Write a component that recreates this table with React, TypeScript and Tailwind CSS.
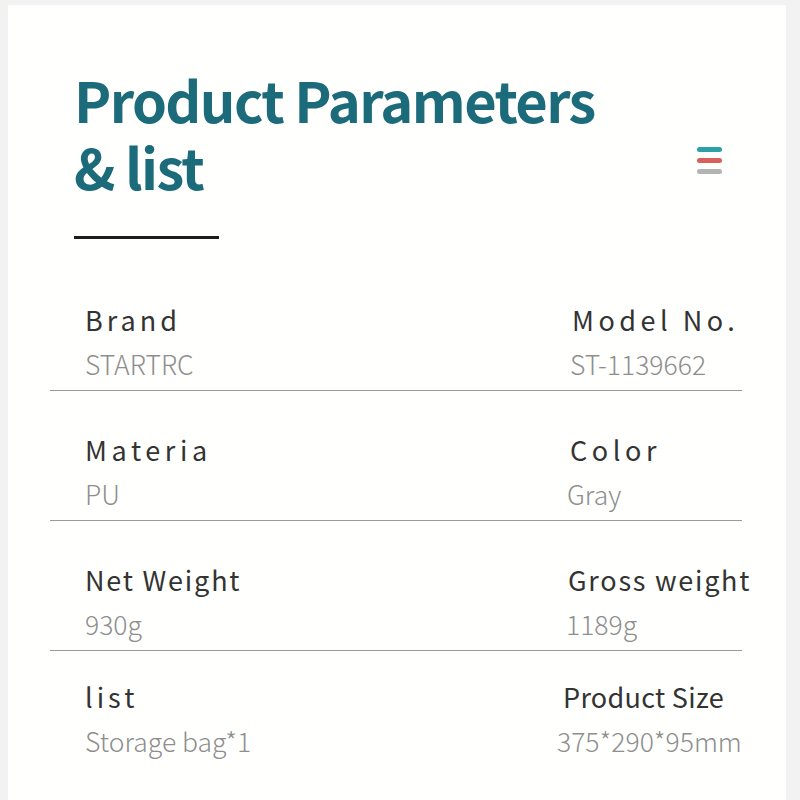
import React from "react";

const rows = [
  {
    l: { label: "Brand", value: "STARTRC", track: "tracking-[4px]" },
    r: { label: "Model No.", value: "ST-1139662", track: "tracking-[4.5px]", lx: "ml-[2px]", vx: "ml-[0px]" },
  },
  {
    l: { label: "Materia", value: "PU", track: "tracking-[4.6px]" },
    r: { label: "Color", value: "Gray", track: "tracking-[4.6px]", lx: "ml-[0px]", vx: "ml-[-3px]" },
  },
  {
    l: { label: "Net Weight", value: "930g", track: "tracking-[1.8px]" },
    r: { label: "Gross weight", value: "1189g", track: "tracking-[1.75px]", lx: "ml-[-2px]", vx: "ml-[-4px]" },
  },
  {
    l: { label: "list", value: "Storage bag*1", track: "tracking-[4px]" },
    r: { label: "Product Size", value: "375*290*95mm", track: "tracking-[0.3px]", lx: "ml-[-7px]", vx: "ml-[-13px]" },
  },
];

export default function App() {
  return (
    <div
      className="w-[800px] h-[800px] bg-[#f2f2f2] pt-[5px] pl-[8px] pr-[14px] overflow-hidden"
      style={{ fontFamily: '"Noto Sans CJK SC", "Noto Sans", sans-serif' }}
    >
      <div className="bg-[#fffffd] h-[795px] flex flex-col">
        <div className="flex items-start pl-[66px] pt-[60px] pr-[64px]">
          <div className="flex-1">
            <h1 className="text-[56px] font-bold text-[#1b6b7b] tracking-[-1.6px]">
              <div className="leading-[67px]">Product Parameters</div>
              <div className="leading-[67px]">& list</div>
            </h1>
            <div className="mt-[37px] w-[145px] h-[3px] bg-[#1c1c1c]" />
          </div>
          <div className="mt-[82px] flex flex-col gap-[6px]">
            <div className="w-[25px] h-[5px] rounded-full bg-[#2ba1a6]" />
            <div className="w-[25px] h-[5px] rounded-full bg-[#d8605b]" />
            <div className="w-[25px] h-[5px] rounded-full bg-[#b3b3b3]" />
          </div>
        </div>
        <div className="ml-[42px] w-[692px] mt-[22px]">
          {rows.map((row, i) => (
            <div
              key={i}
              className={`grid grid-cols-[520px_1fr] h-[130px] ${i < 3 ? "pt-[41px] border-b border-[#9a9a9a]" : "pt-[28px]"}`}
            >
              <div className="pl-[35px] whitespace-nowrap">
                <div className={`text-[27px] leading-[36px] text-[#333333] ${row.l.track}`}>{row.l.label}</div>
                <div className="text-[26.5px] leading-[34px] mt-[9px] font-light text-[#8e8e8e]">{row.l.value}</div>
              </div>
              <div className="whitespace-nowrap">
                <div className={`text-[27px] leading-[36px] text-[#333333] ${row.r.track} ${row.r.lx}`}>{row.r.label}</div>
                <div className={`text-[26.5px] leading-[34px] mt-[9px] font-light text-[#8e8e8e] ${row.r.vx}`}>{row.r.value}</div>
              </div>
            </div>
          ))}
        </div>
      </div>
    </div>
  );
}
